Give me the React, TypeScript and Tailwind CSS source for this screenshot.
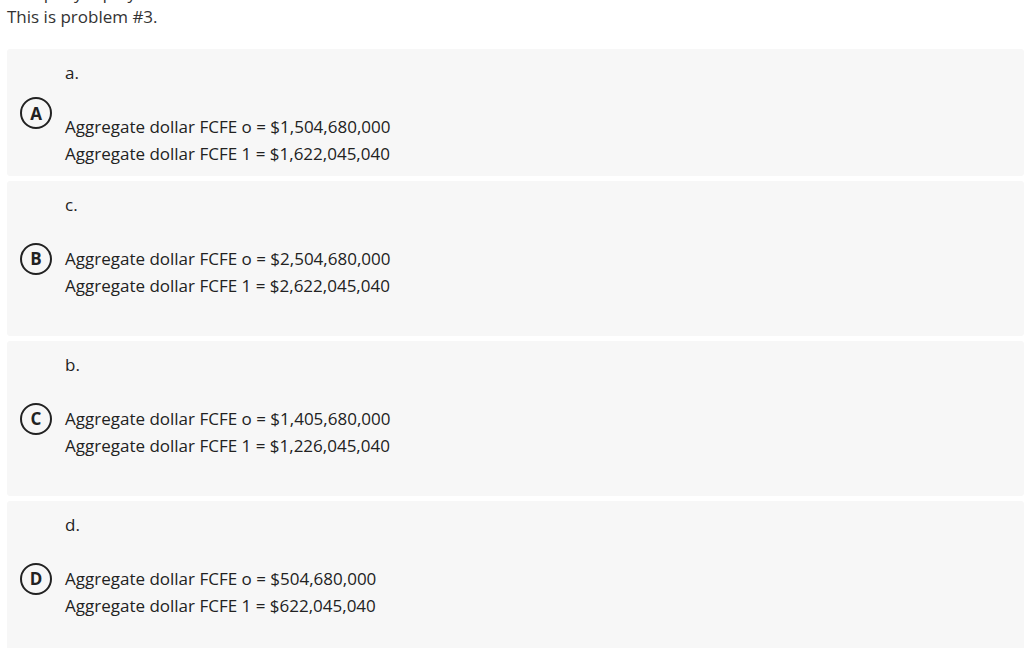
const options = [
  {
    key: 'A',
    label: 'a.',
    lines: ['Aggregate dollar FCFE o = $1,504,680,000', 'Aggregate dollar FCFE 1 = $1,622,045,040'],
    trailing: false,
  },
  {
    key: 'B',
    label: 'c.',
    lines: ['Aggregate dollar FCFE o = $2,504,680,000', 'Aggregate dollar FCFE 1 = $2,622,045,040'],
    trailing: true,
  },
  {
    key: 'C',
    label: 'b.',
    lines: ['Aggregate dollar FCFE o = $1,405,680,000', 'Aggregate dollar FCFE 1 = $1,226,045,040'],
    trailing: true,
  },
  {
    key: 'D',
    label: 'd.',
    lines: ['Aggregate dollar FCFE o = $504,680,000', 'Aggregate dollar FCFE 1 = $622,045,040'],
    trailing: true,
  },
];

const App = () => {
  return (
    <div className="min-h-screen bg-white text-[#333] font-['Open_Sans',sans-serif] text-[17px] leading-[27px] overflow-hidden">
      {/* Question text */}
      <div className="pl-[7px]">
        <p className="mt-[-19px] leading-[24px]">Company equity</p>
        <p className="leading-[24px]">This is problem #3.</p>
      </div>

      {/* Options */}
      <div className="mt-[20px] pl-[7px] flex flex-col gap-[5px]">
        {options.map((opt) => (
          <div
            key={opt.key}
            className={
              opt.trailing
                ? 'bg-[#f7f7f7] rounded-[3px] flex items-center pl-[13px] pt-[10px] pb-[10px]'
                : 'bg-[#f7f7f7] rounded-[3px] flex items-center pl-[13px] pt-[10px] pb-[9px]'
            }
          >
            <div className="w-[32px] h-[32px] shrink-0 rounded-full border-2 border-[#222] flex items-center justify-center">
              <span className="text-[17px] font-bold leading-none text-[#222]">{opt.key}</span>
            </div>
            <div className="pl-[13px] font-medium text-[#222]">
              <p>{opt.label}</p>
              <p>&nbsp;</p>
              {opt.lines.map((line) => (
                <p key={line}>{line}</p>
              ))}
              {opt.trailing && <p>&nbsp;</p>}
            </div>
          </div>
        ))}
      </div>
    </div>
  );
};

export default App;
